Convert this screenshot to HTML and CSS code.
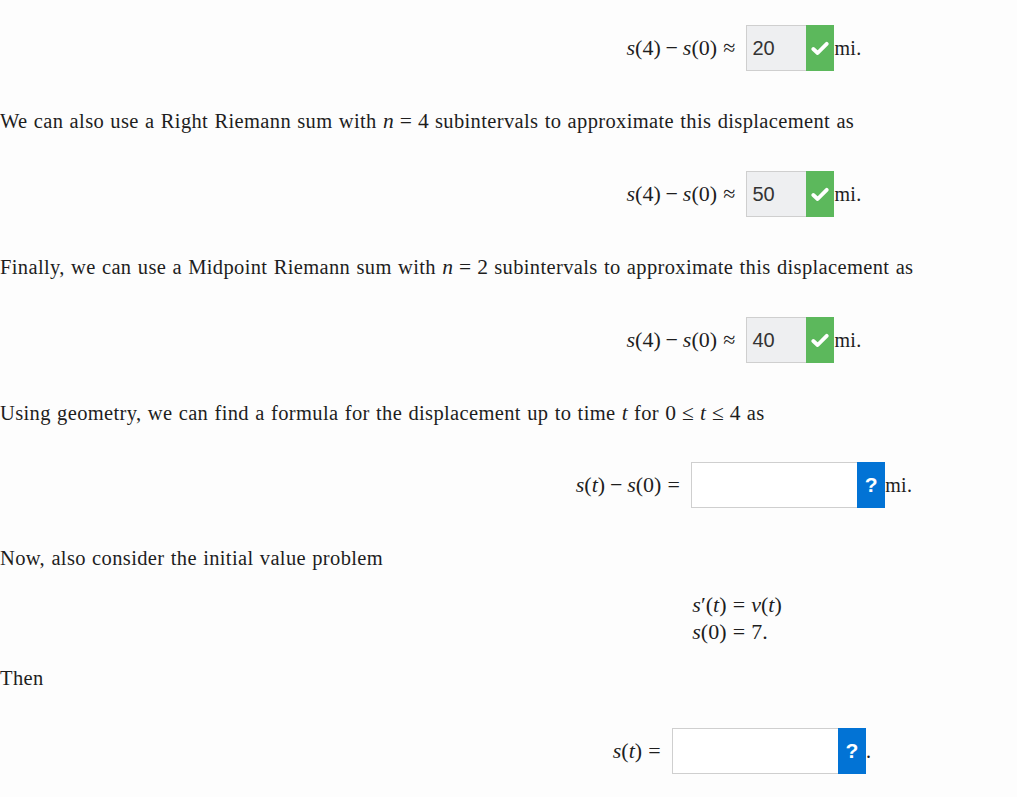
FILE: index.html
```html
<!DOCTYPE html>
<html>
<head>
<meta charset="utf-8">
<link rel="stylesheet" href="styles.css">
</head>
<body>
<div class="page">
  <div class="display">
    <span class="math"><i>s</i>(4)<span class="bin">−</span><i>s</i>(0)<span class="rel">≈</span></span>
    <span class="answer">
      <span class="field field-done short">20</span>
      <span class="btn btn-ok"><svg viewBox="0 0 18 15" width="18" height="15"><path d="M2.3 8 L6.6 12 L15.7 2.8" fill="none" stroke="#fff" stroke-width="3.8" stroke-linecap="round" stroke-linejoin="round"/></svg></span>
    </span>
    <span class="unit">mi.</span>
  </div>

  <p class="para">We can also use a Right Riemann sum with <span class="im"><i>n</i><span class="rel">=</span>4</span> subintervals to approximate this displacement as</p>

  <div class="display">
    <span class="math"><i>s</i>(4)<span class="bin">−</span><i>s</i>(0)<span class="rel">≈</span></span>
    <span class="answer">
      <span class="field field-done short">50</span>
      <span class="btn btn-ok"><svg viewBox="0 0 18 15" width="18" height="15"><path d="M2.3 8 L6.6 12 L15.7 2.8" fill="none" stroke="#fff" stroke-width="3.8" stroke-linecap="round" stroke-linejoin="round"/></svg></span>
    </span>
    <span class="unit">mi.</span>
  </div>

  <p class="para">Finally, we can use a Midpoint Riemann sum with <span class="im"><i>n</i><span class="rel">=</span>2</span> subintervals to approximate this displacement as</p>

  <div class="display">
    <span class="math"><i>s</i>(4)<span class="bin">−</span><i>s</i>(0)<span class="rel">≈</span></span>
    <span class="answer">
      <span class="field field-done short">40</span>
      <span class="btn btn-ok"><svg viewBox="0 0 18 15" width="18" height="15"><path d="M2.3 8 L6.6 12 L15.7 2.8" fill="none" stroke="#fff" stroke-width="3.8" stroke-linecap="round" stroke-linejoin="round"/></svg></span>
    </span>
    <span class="unit">mi.</span>
  </div>

  <p class="para">Using geometry, we can find a formula for the displacement up to time <span class="im"><i>t</i></span> for <span class="im">0<span class="rel">≤</span><i>t</i><span class="rel">≤</span>4</span> as</p>

  <div class="display display-tall">
    <span class="math"><i>s</i>(<i>t</i>)<span class="bin">−</span><i>s</i>(0)<span class="rel">=</span></span>
    <span class="answer">
      <span class="field long"></span>
      <span class="btn btn-help">?</span>
    </span>
    <span class="unit">mi.</span>
  </div>

  <p class="para">Now, also consider the initial value problem</p>

  <div class="aligned">
    <span class="lhs math"><i>s</i>′(<i>t</i>)</span><span class="rhs math"><span class="rel">=</span><i>v</i>(<i>t</i>)</span>
    <span class="lhs math"><i>s</i>(0)</span><span class="rhs math"><span class="rel">=</span>7.</span>
  </div>

  <p class="para">Then</p>

  <div class="display display-last">
    <span class="math"><i>s</i>(<i>t</i>)<span class="rel">=</span></span>
    <span class="answer">
      <span class="field long"></span>
      <span class="btn btn-help">?</span>
    </span>
    <span class="unit">.</span>
  </div>
</div>
</body>
</html>
```

FILE: styles.css
```css
html {
  overflow: hidden;
  background: #fdfdfd;
}

body {
  margin: 0;
  background: #fdfdfd;
  color: #1e1e1e;
  font-family: "Liberation Serif", "Times New Roman", serif;
  font-size: 20.5px;
}

.page {
  width: 1488px;
  display: flow-root;
}

.para {
  margin: 0;
  line-height: 24px;
  height: 24px;
  white-space: nowrap;
  letter-spacing: 0.36px;
  word-spacing: 0.8px;
}

.im {
  font-size: 1.05em;
  letter-spacing: 0;
}

.im i,
.math i {
  font-style: italic;
}

.rel {
  margin: 0 0.28em;
}

.bin {
  margin: 0 0.22em;
}

.display {
  display: flex;
  justify-content: center;
  align-items: center;
  height: 46px;
  margin: 38px 0;
}

.display:first-child {
  margin-top: 25px;
}

.display-tall {
  margin-top: 37px;
}

.display-last {
  margin-left: -4px;
}

.math {
  font-size: 22px;
  white-space: nowrap;
}

.answer {
  display: flex;
  height: 46px;
  margin-left: 5px;
}

.field {
  box-sizing: border-box;
  height: 46px;
  border: 1px solid #cfcfcf;
  border-right: none;
  background: #fff;
  font-family: "Liberation Sans", Arial, sans-serif;
  font-size: 20px;
  color: #333;
  line-height: 44px;
  padding-left: 5px;
}

.field-done {
  background: #eeeff1;
}

.short {
  width: 60px;
}

.long {
  width: 166px;
}

.btn {
  width: 28px;
  height: 46px;
  display: flex;
  align-items: center;
  justify-content: center;
  color: #fff;
}

.btn-ok {
  background: #5cb85c;
}

.btn-help {
  background: #0273d5;
  font-family: "Liberation Sans", Arial, sans-serif;
  font-weight: bold;
  font-size: 21px;
}

.unit {
  font-size: 20px;
  letter-spacing: 0.3px;
}

.aligned {
  display: grid;
  grid-template-columns: auto auto;
  justify-content: center;
  margin: 21px 0;
  padding-right: 14px;
  line-height: 27px;
}

.lhs {
  text-align: right;
}

.rhs {
  text-align: left;
}
```
